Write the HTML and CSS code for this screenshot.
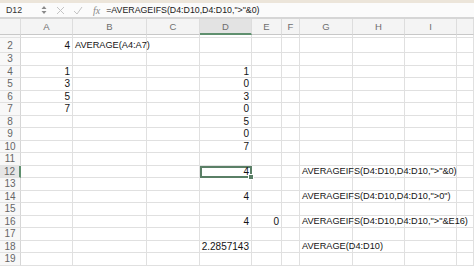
FILE: index.html
```html
<!DOCTYPE html>
<html lang="en">
<head>
    <meta charset="UTF-8">
    <title>AVERAGEIFS</title>
    <link rel="stylesheet" href="styles.css">
</head>
<body>
    <div class="formula-bar">
        <div class="name-box">D12</div>
        <svg class="spinner" width="6" height="10" viewBox="0 0 6 10">
            <path d="M3 1 L5.5 4 L0.5 4 Z M3 9 L5.5 6 L0.5 6 Z" fill="#8a8a8a"/>
        </svg>
        <span class="sep"></span>
        <svg class="icon" width="9" height="9" viewBox="0 0 9 9">
            <path d="M1 1 L8 8 M8 1 L1 8" stroke="#c4c4c4" stroke-width="1"/>
        </svg>
        <svg class="icon" width="10" height="9" viewBox="0 0 10 9">
            <path d="M1 5 L4 8 L9 1" stroke="#c4c4c4" stroke-width="1" fill="none"/>
        </svg>
        <span class="fx">fx</span>
        <div class="formula">=AVERAGEIFS(D4:D10,D4:D10,"&gt;"&amp;0)</div>
    </div>
    <div class="sheet" id="sheet"></div>
    <script>
        const cols = ["", "A", "B", "C", "D", "E", "F", "G", "H", "I", ""];
        const rows = [1, 2, 3, 4, 5, 6, 7, 8, 9, 10, 11, 12, 13, 14, 15, 16, 17, 18, 19];
        const data = {
            A2: "4", B2: "AVERAGE(A4:A7)",
            A4: "1", A5: "3", A6: "5", A7: "7",
            D4: "1", D5: "0", D6: "3", D7: "0", D8: "5", D9: "0", D10: "7",
            D12: "4", G12: 'AVERAGEIFS(D4:D10,D4:D10,">"&0)',
            D14: "4", G14: 'AVERAGEIFS(D4:D10,D4:D10,">0")',
            D16: "4", E16: "0", G16: 'AVERAGEIFS(D4:D10,D4:D10,">"&E16)',
            D18: "2.2857143", G18: "AVERAGE(D4:D10)"
        };

        const sheet = document.getElementById("sheet");

        function addCell(cls, text) {
            const cell = document.createElement("div");
            cell.className = cls;
            if (text) cell.textContent = text;
            sheet.appendChild(cell);
            return cell;
        }

        cols.forEach((c, i) => {
            let cls = i === 0 ? "col-head corner" : "col-head";
            if (c === "D") cls += " active";
            addCell(cls, c);
        });

        rows.forEach(r => {
            // row 1 is scrolled almost out of view, only a sliver shows
            let label = r === 1 ? "" : String(r);
            addCell(r === 12 ? "row-head active" : "row-head", label);
            cols.slice(1).forEach(c => {
                const val = data[c + r];
                let cls = "cell";
                if (val) cls += isNaN(val) ? " text" : " num";
                if (c + r === "D12") cls += " selected";
                addCell(cls, val);
            });
        });
    </script>
</body>
</html>
```
FILE: styles.css
```css
body {
    margin: 0;
    font-family: "Liberation Sans", Arial, sans-serif;
    background: #ffffff;
    color: #141414;
    width: 474px;
    height: 269px;
    overflow: hidden;
}
.formula-bar {
    display: flex;
    align-items: center;
    height: 14px;
    border-top: 3px solid #ece5da;
    border-bottom: 2px solid #d6d6d6;
    background: #fbfbfb;
    font-size: 8.8px;
}
.name-box {
    width: 34px;
    padding-left: 6px;
    color: #333;
}
.spinner {
    margin-left: 1px;
}
.sep {
    width: 9px;
}
.icon {
    margin-right: 8px;
}
.fx {
    font-family: "Liberation Serif", serif;
    font-style: italic;
    font-size: 10px;
    color: #888;
    margin-left: 2px;
    margin-right: 6px;
}
.formula {
    color: #1a1a1a;
    white-space: nowrap;
}
.sheet {
    display: grid;
    grid-template-columns: 21px 52px 74px 53px 52px 30px 18px 53px 52px 52px 1fr;
    grid-template-rows: 16px 3px 15px repeat(17, 12.5px);
    font-size: 9.2px;
}
.col-head {
    background: #f4f4f4;
    color: #6e6e6e;
    text-align: center;
    font-size: 9.5px;
    line-height: 15px;
    border-right: 1px solid #dddddd;
    border-bottom: 1px solid #c8c8c8;
    box-sizing: border-box;
}
.col-head.active {
    background: #e3e3e3;
    border-bottom: 2px solid #5f8f6e;
}
.row-head {
    background: #f8f8f8;
    color: #666;
    font-size: 10px;
    border-right: 1px solid #d6d6d6;
    border-bottom: 1px solid #e2e2e2;
    box-sizing: border-box;
    display: flex;
    align-items: center;
    justify-content: center;
    overflow: hidden;
}
.row-head.active {
    background: #e6e6e6;
    border-right: 2px solid #5f8f6e;
}
.cell {
    border-right: 1px solid #e0e0e0;
    border-bottom: 1px solid #e0e0e0;
    box-sizing: border-box;
    display: flex;
    align-items: center;
    white-space: nowrap;
    position: relative;
}
.num {
    justify-content: flex-end;
    padding-right: 2px;
    font-size: 10px;
}
.text {
    padding-left: 2px;
    z-index: 1;
    overflow: visible;
}
.selected {
    border: 2px solid #5a7f66;
    padding-right: 1px;
    z-index: 2;
}
.selected::after {
    content: "";
    position: absolute;
    right: -4px;
    bottom: -4px;
    width: 4px;
    height: 4px;
    background: #5a7f66;
    border: 1px solid #fff;
}
```
